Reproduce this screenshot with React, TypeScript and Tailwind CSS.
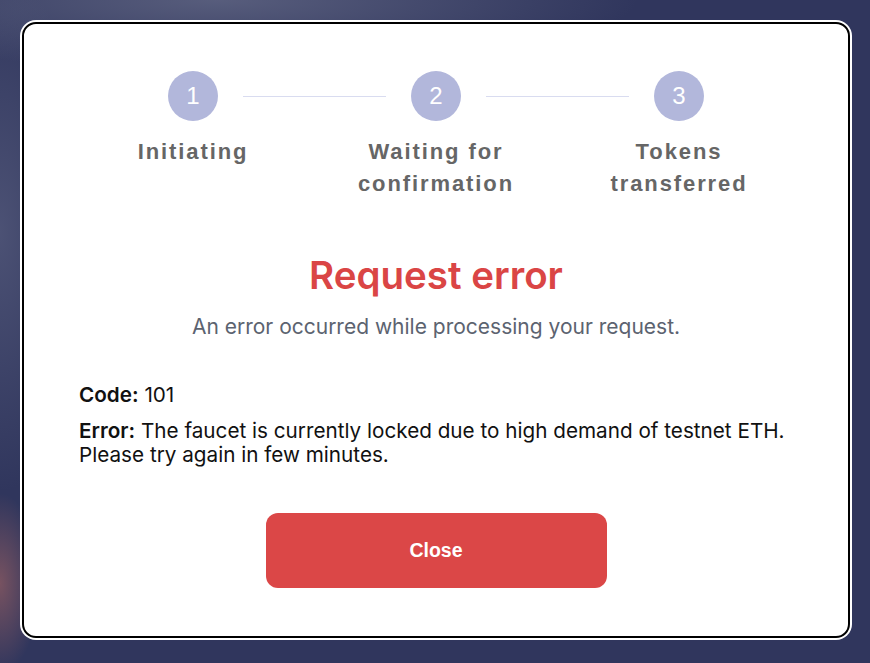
import React from 'react';

const steps = [
  { n: 1, label: 'Initiating' },
  { n: 2, label: 'Waiting for confirmation' },
  { n: 3, label: 'Tokens transferred' },
];

export default function App() {
  return (
    <div className="relative w-full h-[663px] overflow-hidden bg-[#30365d] bg-[radial-gradient(ellipse_40px_90px_at_0%_88%,rgba(190,110,100,0.5),transparent),radial-gradient(ellipse_420px_70px_at_25%_0%,rgba(120,125,150,0.55),transparent),radial-gradient(ellipse_90px_260px_at_0%_35%,rgba(110,115,145,0.45),transparent)] pt-[20px] pl-[20px]">
      {/* modal */}
      <div className="w-[832px] h-[620px] rounded-[16px] bg-white p-[2px]">
        <div className="w-full h-full rounded-[14px] border-2 border-black bg-white flex flex-col items-center pt-[47px] font-['Inter',sans-serif]">
          {/* stepper */}
          <div className="flex items-center">
            {steps.map((s, i) => (
              <React.Fragment key={s.n}>
                {i > 0 && <div className="w-[143px] h-px bg-[#d9dcf0] mx-[25px]" />}
                <div className="w-[50px] h-[50px] rounded-full bg-[#b2b7db] flex items-center justify-center text-white text-[24px] font-['Liberation_Sans',Arial,sans-serif]">
                  {s.n}
                </div>
              </React.Fragment>
            ))}
          </div>
          <div className="flex gap-[63px] mt-[15px]">
            {steps.map((s) => (
              <div
                key={s.n}
                className="w-[180px] text-center text-[22px] leading-[32px] font-bold tracking-[1.9px] text-[#666666] font-['Liberation_Sans',Arial,sans-serif]"
              >
                {s.label}
              </div>
            ))}
          </div>

          <h2 className="mt-[53px] text-[38.5px] leading-[44px] font-semibold text-[#da4545]">Request error</h2>
          <p className="mt-[16px] text-[21px] leading-[28px] text-[#5c6370]">
            An error occurred while processing your request.
          </p>

          <div className="self-stretch pl-[55px] pr-[30px] mt-[42px] text-[20.7px] leading-[24px] text-[#111111]">
            <p>
              <span className="font-semibold">Code:</span> 101
            </p>
            <p className="mt-[12px]">
              <span className="font-semibold">Error:</span> The faucet is currently locked due to high demand of testnet ETH. Please try again in few minutes.
            </p>
          </div>

          <button className="mt-[46px] w-[341px] h-[75px] rounded-[12px] bg-[#db4747] text-white text-[19.5px] font-bold font-['Liberation_Sans',Arial,sans-serif]">
            Close
          </button>
        </div>
      </div>
    </div>
  );
}
